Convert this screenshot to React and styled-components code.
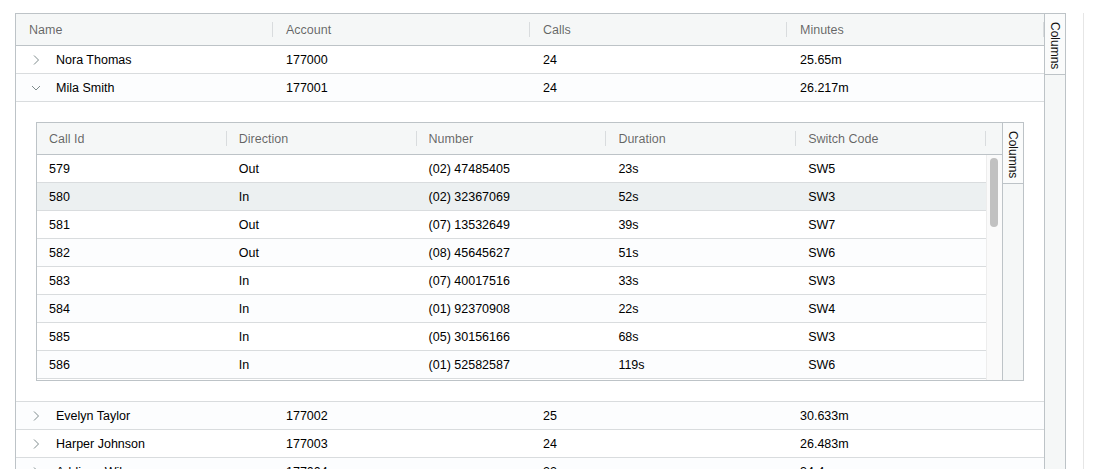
import React from 'react'
import styled, { createGlobalStyle } from 'styled-components'

const GlobalStyle = createGlobalStyle`
  html, body {
    margin: 0;
    background: #fff;
  }
  body {
    font-family: "Liberation Sans", Arial, sans-serif;
    font-size: 12.5px;
    color: #000;
    -webkit-font-smoothing: antialiased;
  }
`

const accounts = [
  { name: 'Nora Thomas', account: '177000', calls: 24, minutes: '25.65m' },
  { name: 'Mila Smith', account: '177001', calls: 24, minutes: '26.217m', open: true },
  { name: 'Evelyn Taylor', account: '177002', calls: 25, minutes: '30.633m' },
  { name: 'Harper Johnson', account: '177003', calls: 24, minutes: '26.483m' },
  { name: 'Addison Wilson', account: '177004', calls: 22, minutes: '34.4m' },
]

const calls = [
  ['579', 'Out', '(02) 47485405', '23s', 'SW5'],
  ['580', 'In', '(02) 32367069', '52s', 'SW3'],
  ['581', 'Out', '(07) 13532649', '39s', 'SW7'],
  ['582', 'Out', '(08) 45645627', '51s', 'SW6'],
  ['583', 'In', '(07) 40017516', '33s', 'SW3'],
  ['584', 'In', '(01) 92370908', '22s', 'SW4'],
  ['585', 'In', '(05) 30156166', '68s', 'SW3'],
  ['586', 'In', '(01) 52582587', '119s', 'SW6'],
]

const masterCols = ['Name', 'Account', 'Calls', 'Minutes']
const detailCols = ['Call Id', 'Direction', 'Number', 'Duration', 'Switch Code']

function Chevron({ open }) {
  return (
    <svg width="12" height="12" viewBox="0 0 12 12" fill="none" stroke="#7f8c8d" strokeWidth="1">
      {open ? <path d="M2 4 L6 8 L10 4" /> : <path d="M4 1.5 L8.5 6 L4 10.5" />}
    </svg>
  )
}

function SideBar() {
  return (
    <Side>
      <SideTab>Columns</SideTab>
    </Side>
  )
}

function DetailGrid() {
  return (
    <Grid>
      <GridMain>
        <HeaderRow>
          {detailCols.map((c) => (
            <HeaderCell key={c}>{c}</HeaderCell>
          ))}
          <HeaderFiller />
        </HeaderRow>
        <DetailBody>
          <DetailRows>
            {calls.map((r, i) => (
              <Row key={r[0]} odd={i % 2 === 1} hover={i === 1}>
                {r.map((v, j) => (
                  <Cell key={j} inner>{v}</Cell>
                ))}
              </Row>
            ))}
          </DetailRows>
          <ScrollTrack>
            <ScrollThumb />
          </ScrollTrack>
        </DetailBody>
      </GridMain>
      <SideBar />
    </Grid>
  )
}

export default function App() {
  return (
    <>
      <GlobalStyle />
      <Page>
        <Grid>
          <GridMain>
            <HeaderRow>
              {masterCols.map((c) => (
                <HeaderCell key={c} master>{c}</HeaderCell>
              ))}
            </HeaderRow>
            {accounts.map((a, i) => (
              <React.Fragment key={a.account}>
                <Row odd={i === 1 || i === 2 || i === 4}>
                  <Cell>
                    <Expander>
                      <Chevron open={a.open} />
                    </Expander>
                    {a.name}
                  </Cell>
                  <Cell>{a.account}</Cell>
                  <Cell>{a.calls}</Cell>
                  <Cell>{a.minutes}</Cell>
                </Row>
                {a.open && (
                  <DetailPanel>
                    <DetailGrid />
                  </DetailPanel>
                )}
              </React.Fragment>
            ))}
          </GridMain>
          <SideBar />
        </Grid>
        <Gutter />
      </Page>
    </>
  )
}

// ---------------------------------------------------------------

const Page = styled.div`
  display: flex;
  align-items: flex-start;
  padding: 13px 13px 0 15px;
  height: 469px;
  box-sizing: border-box;
  overflow: hidden;
`

const Gutter = styled.div`
  width: 17px;
  flex: none;
  align-self: stretch;
  border-right: 1px solid #e6e6e6;
`

const Grid = styled.div`
  display: flex;
  flex: 1;
  min-width: 0;
  border: 1px solid #bdc3c7;
  background: #fff;
`

const GridMain = styled.div`
  flex: 1;
  display: flex;
  flex-direction: column;
  min-width: 0;
`

const HeaderRow = styled.div`
  display: flex;
  height: 31px;
  background: #f5f7f7;
  border-bottom: 1px solid #bdc3c7;
`

const HeaderCell = styled.div`
  flex: 1;
  position: relative;
  display: flex;
  align-items: center;
  padding-left: ${({ master }) => (master ? '13px' : '12px')};
  color: rgba(0, 0, 0, 0.6);
  white-space: nowrap;

  &::after {
    content: '';
    position: absolute;
    right: 0;
    top: 8px;
    height: 15px;
    width: 1px;
    background: #d9dcde;
  }
`

const HeaderFiller = styled.div`
  width: 16px;
`

const Row = styled.div`
  display: flex;
  height: 27px;
  flex: none;
  border-bottom: 1px solid #d9dcde;
  background: ${({ hover, odd }) => (hover ? '#ecf0f1' : odd ? '#fcfdfe' : '#fff')};
`

const Cell = styled.div`
  flex: 1;
  display: flex;
  align-items: center;
  padding-left: ${({ inner }) => (inner ? '12px' : '13px')};
  white-space: nowrap;
  overflow: hidden;
`

const Expander = styled.span`
  width: 27px;
  display: flex;
  align-items: center;
  padding-left: 1px;
  box-sizing: border-box;
`

const DetailPanel = styled.div`
  padding: 20px;
  border-bottom: 1px solid #d9dcde;
  background: #fff;
`

const DetailBody = styled.div`
  display: flex;
  height: 225px;
  overflow: hidden;
`

const DetailRows = styled.div`
  flex: 1;
  display: flex;
  flex-direction: column;
`

const ScrollTrack = styled.div`
  width: 16px;
  position: relative;
  background: #fafafa;
  border-left: 1px solid #ededed;
  box-sizing: border-box;
`

const ScrollThumb = styled.div`
  position: absolute;
  left: 3px;
  top: 3px;
  width: 8px;
  height: 69px;
  border-radius: 4px;
  background: #c1c1c1;
`

const Side = styled.div`
  width: 20px;
  flex: none;
  border-left: 1px solid #bdc3c7;
  background: #f5f7f7;
  display: flex;
  flex-direction: column;
`

const SideTab = styled.div`
  writing-mode: vertical-rl;
  height: 61px;
  padding-top: 8px;
  box-sizing: border-box;
  border-bottom: 1px solid #bdc3c7;
  background: #fafbfb;
  display: flex;
  align-items: center;
  justify-content: flex-start;
  font-size: 12px;
  color: #111;
  line-height: 20px;
`
